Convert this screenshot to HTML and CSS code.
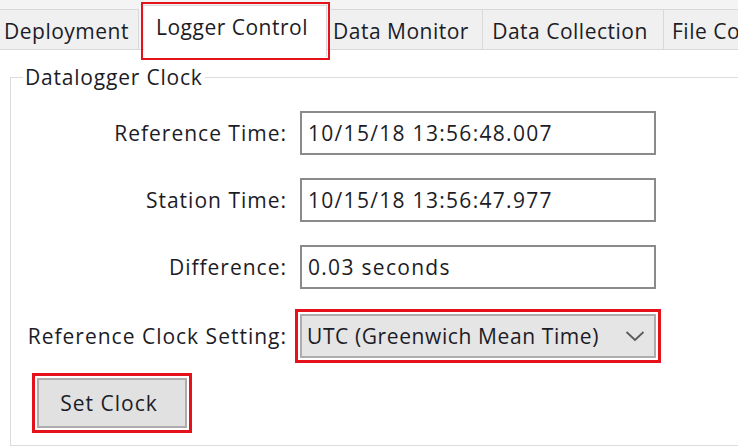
FILE: index.html
```html
<!DOCTYPE html>
<html>
<head>
<meta charset="utf-8">
<link rel="stylesheet" href="styles.css">
</head>
<body>
<div class="tabbar">
  <div class="tab tab-first">Deployment</div>
  <div class="tab tab-active">Logger Control</div>
  <div class="tab tab-mon">Data Monitor</div>
  <div class="tab tab-coll">Data Collection</div>
  <div class="tab tab-file">File Control</div>
</div>
<fieldset class="group">
  <legend class="group-title">Datalogger Clock</legend>
  <div class="form">
    <span class="lbl">Reference Time:</span>
    <div class="field">10/15/18 13:56:48.007</div>
    <span class="lbl">Station Time:</span>
    <div class="field">10/15/18 13:56:47.977</div>
    <span class="lbl">Difference:</span>
    <div class="field">0.03 seconds</div>
    <span class="lbl lbl-combo">Reference Clock Setting:</span>
    <div class="combo annot">
      <span>UTC (Greenwich Mean Time)</span>
      <svg class="chev" width="20" height="12" viewBox="0 0 20 12"><path d="M1.5 2 L10 10 L18.5 2" fill="none" stroke="#5a5a5a" stroke-width="1.8"/></svg>
    </div>
  </div>
  <button class="btn annot">Set Clock</button>
</fieldset>
</body>
</html>
```
FILE: styles.css
```css
html, body {
  margin: 0;
  padding: 0;
  overflow: hidden;
  background: #ffffff;
}
body {
  width: 738px;
  height: 447px;
  font-family: "Open Sans", "Noto Sans", sans-serif;
  font-size: 21px;
  letter-spacing: 0.8px;
  color: #1c1c26;
}
.tabbar {
  display: flex;
  align-items: flex-end;
  height: 49px;
  border-bottom: 1px solid #d9d9d9;
  background: #f4f4f4;
}
.tab {
  box-sizing: border-box;
  height: 40px;
  border: 1px solid #d9d9d9;
  border-bottom: none;
  background: #f0f0f0;
  display: flex;
  align-items: center;
  justify-content: center;
  padding-top: 2px;
  white-space: nowrap;
  overflow: hidden;
  flex: none;
  letter-spacing: 0.5px;
}
.tab + .tab { border-left: none; }
.tab-first { width: 141px; margin-left: -2px; padding-right: 4px; }
.tab-active {
  position: relative;
  z-index: 1;
  width: 183px;
  height: 52px;
  margin-left: 5px;
  margin-bottom: -8px;
  background: #ffffff;
  border-left: 1px solid #d9d9d9;
  align-items: flex-start;
  padding-top: 7px;
  padding-right: 6px;
  outline: 2px solid #e3121b;
  outline-offset: 1px;
}
.tab-mon { width: 152px; margin-left: 4px; border-left: 1px solid #d9d9d9; justify-content: flex-start; padding-left: 2px; }
.tab-coll { width: 181px; padding-right: 6px; }
.tab-file { width: 76px; justify-content: flex-start; padding-left: 8px; }

.group {
  margin: 13px -40px 0 10px;
  padding: 20px 0 17px 12px;
  border: 1px solid #dcdcdc;
  min-width: 0;
}
.group-title {
  padding: 0 2px;
  line-height: 28px;
}
.form {
  display: grid;
  grid-template-columns: 264px 356px;
  column-gap: 13px;
  row-gap: 23px;
  align-items: center;
}
.lbl {
  text-align: right;
  letter-spacing: 1px;
}
.field {
  box-sizing: border-box;
  height: 44px;
  border: 2px solid #8a8a8a;
  background: #ffffff;
  padding: 0 6px;
  display: flex;
  align-items: center;
  letter-spacing: 1.3px;
}
.lbl-combo { margin-top: 2px; }
.combo {
  box-sizing: border-box;
  margin-top: 2px;
  height: 44px;
  border: 2px solid #adadad;
  background: #e5e5e5;
  padding: 0 9px 0 5px;
  display: flex;
  align-items: center;
  justify-content: space-between;
  letter-spacing: 0.6px;
}
.annot {
  outline: 3px solid #e3121b;
  outline-offset: 2px;
}
.btn {
  display: block;
  box-sizing: border-box;
  margin: 20px 0 0 14px;
  width: 150px;
  height: 50px;
  border: 2px solid #adadad;
  background: #e1e1e1;
  font-family: inherit;
  font-size: 21px;
  letter-spacing: 1px;
  color: inherit;
  padding: 0 6px 0 0;
}
```
